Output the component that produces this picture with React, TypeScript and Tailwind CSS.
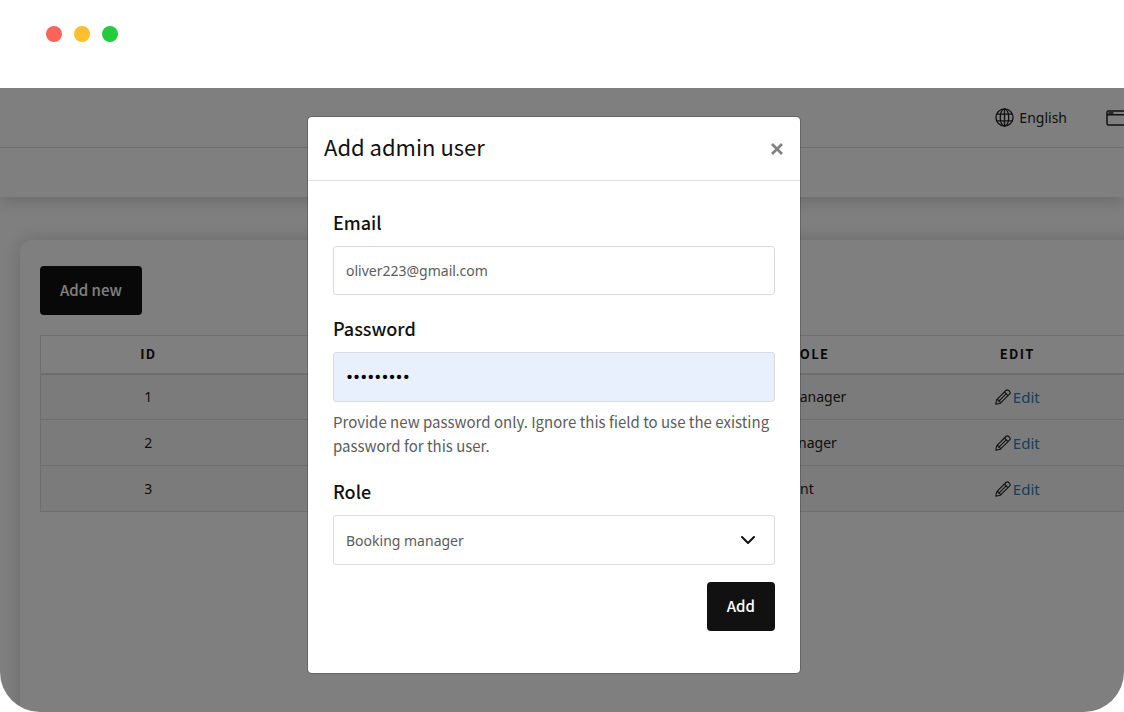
import type { ReactNode } from 'react';

const users = [
  { id: 1, role: 'Booking manager' },
  { id: 2, role: 'Hotel manager' },
  { id: 3, role: 'Content' },
];

const roles = ['Booking manager', 'Hotel manager', 'Content'];

function GlobeIcon() {
  return (
    <svg className="size-[19px]" viewBox="0 0 20 20" fill="none" stroke="currentColor" strokeWidth="1.4" aria-hidden="true">
      <circle cx="10" cy="10" r="9" />
      <ellipse cx="10" cy="10" rx="4.5" ry="9" />
      <path d="M10 1v18M1.8 6.5h16.4M1.8 13.5h16.4" />
    </svg>
  );
}

function WindowIcon() {
  return (
    <svg className="h-4 w-5" viewBox="0 0 20 16" fill="none" stroke="currentColor" strokeWidth="1.5" aria-hidden="true">
      <rect x="1" y="1" width="18" height="14" rx="1.5" />
      <path d="M1 4.8h18" />
      <path d="M2.5 3h5" />
    </svg>
  );
}

function PencilIcon() {
  return (
    <svg className="size-4" viewBox="0 0 16 16" fill="none" stroke="currentColor" strokeWidth="1.1" strokeLinejoin="round" aria-hidden="true">
      <path d="M.8 15.2l1-4.6L10.9 1.5a2 2 0 0 1 2.8 0l.8.8a2 2 0 0 1 0 2.8L5.4 14.2z" />
      <path d="M1.8 10.6c1.5-.2 3.7 2 3.6 3.6M3.4 12.6l8.3-8.3M9.4 3l3.6 3.6" />
    </svg>
  );
}

function Field({ id, label, children }: { id: string; label: string; children: ReactNode }) {
  return (
    <div className="flex flex-col gap-2">
      <label htmlFor={id} className="font-['Noto_Sans_CJK_SC',sans-serif] text-[18px] leading-8 font-medium text-[#111]">
        {label}
      </label>
      {children}
    </div>
  );
}

function AdminPage() {
  return (
    <div className="absolute inset-0 overflow-hidden bg-white">
      <header className="shadow-[0_4px_16px_rgba(0,0,0,0.18)]">
        <div className="flex h-15 items-center justify-end gap-[39px] border-b border-[#dddddd] text-[14px] text-[#222]">
          <a href="#" className="flex items-center gap-[5px]">
            <GlobeIcon />
            English
          </a>
          <a href="#" aria-label="Dashboard" className="w-[18px]">
            <WindowIcon />
          </a>
        </div>
        <div className="h-[49px]" />
      </header>

      <main className="mt-[43px] ml-5 h-full w-[1160px] rounded-xl bg-white p-5 pt-[26px] shadow-[0_0_20px_rgba(0,0,0,0.18)]">
        <button
          type="button"
          className="h-[49px] rounded-sm bg-[#111] px-5 font-['Noto_Sans_CJK_SC',sans-serif] text-[15px] font-medium text-white"
        >
          Add new
        </button>
        <table className="mt-5 w-[1092px] table-fixed border-collapse border border-[#dddddd] text-center text-[14px] text-[#222]">
          <thead className="font-['Noto_Sans_CJK_SC',sans-serif] text-[13px] leading-4 tracking-widest text-[#111]">
            <tr className="h-[38px] border-b-2 border-[#dddddd]">
              <th className="w-[215px] font-bold">ID</th>
              <th className="w-[417px]" />
              <th className="w-[230px] font-bold">USER ROLE</th>
              <th className="w-[230px] font-bold">EDIT</th>
            </tr>
          </thead>
          <tbody>
            {users.map((user) => (
              <tr key={user.id} className="h-[46px] border-b border-[#dddddd] bg-[#f7f7f7]">
                <td>{user.id}</td>
                <td />
                <td>{user.role}</td>
                <td>
                  <a href="#" className="inline-flex items-center gap-0.5 align-middle text-[15px]">
                    <PencilIcon />
                    <span className="text-[#337ab7]">Edit</span>
                  </a>
                </td>
              </tr>
            ))}
          </tbody>
        </table>
      </main>
    </div>
  );
}

function AddUserModal() {
  return (
    <div role="dialog" aria-labelledby="modal-title" className="relative w-full max-w-[494px] rounded-[5px] border border-black/20 bg-white bg-clip-padding">
      <div className="flex h-16 items-center justify-between border-b border-[#dee2e6] px-4">
        <h2 id="modal-title" className="pb-1 font-['Noto_Sans_CJK_SC',sans-serif] text-[22px] text-[#111]">
          Add admin user
        </h2>
        <button type="button" aria-label="Close" className="text-[#808080]">
          <svg className="size-3.5" viewBox="0 0 14 14" stroke="currentColor" strokeWidth="2.6" aria-hidden="true">
            <path d="M2 2l10 10M12 2L2 12" />
          </svg>
        </button>
      </div>

      <form className="flex flex-col gap-[17px] px-[25px] pt-[25px] pb-[42px]" onSubmit={(e) => e.preventDefault()}>
        <Field id="email" label="Email">
          <input
            id="email"
            type="email"
            defaultValue="oliver223@gmail.com"
            className="h-[49px] w-full rounded-[3px] border border-[#d8dce2] px-3 text-[14px] text-[#5c5c5c] outline-none"
          />
        </Field>

        <Field id="password" label="Password">
          <input
            id="password"
            type="password"
            defaultValue="oliver223"
            className="h-[50px] w-full rounded-[3px] border border-[#d8dce2] bg-[#e8f0fe] px-3 font-['Roboto',sans-serif] text-[21px] text-black outline-none"
          />
          <p className="font-['Noto_Sans_CJK_SC',sans-serif] text-[15px] leading-6 text-[#5c5c5c]">
            Provide new password only. Ignore this field to use the existing password for this user.
          </p>
        </Field>

        <Field id="role" label="Role">
          <div className="relative">
            <select
              id="role"
              className="h-[50px] w-full appearance-none rounded-[3px] border border-[#dddddd] bg-white px-3 text-[14px] text-[#5c5c5c] outline-none"
            >
              {roles.map((role) => (
                <option key={role}>{role}</option>
              ))}
            </select>
            <svg
              className="pointer-events-none absolute top-5 right-5 h-2.5 w-3.5"
              viewBox="0 0 14 10"
              fill="none"
              stroke="#111"
              strokeWidth="2"
              strokeLinecap="round"
              strokeLinejoin="round"
              aria-hidden="true"
            >
              <path d="M1 2l6 6 6-6" />
            </svg>
          </div>
        </Field>

        <button
          type="submit"
          className="h-[49px] self-end rounded-sm bg-[#111] px-5 font-['Noto_Sans_CJK_SC',sans-serif] text-[15px] font-medium text-white"
        >
          Add
        </button>
      </form>
    </div>
  );
}

export default function App() {
  return (
    <div className="flex min-h-screen flex-col bg-white font-['Noto_Sans',sans-serif]">
      <div className="flex h-22 items-start gap-3 px-[46px] pt-[26px]">
        <span className="size-4 rounded-full bg-[#fd6458]" />
        <span className="size-4 rounded-full bg-[#ffbf2b]" />
        <span className="size-4 rounded-full bg-[#24cc3d]" />
      </div>
      <div className="relative flex flex-1 items-start justify-center overflow-hidden rounded-b-[40px] pt-7 pr-4 pb-[38px]">
        <AdminPage />
        <div className="absolute inset-0 bg-black/50" />
        <AddUserModal />
      </div>
    </div>
  );
}
